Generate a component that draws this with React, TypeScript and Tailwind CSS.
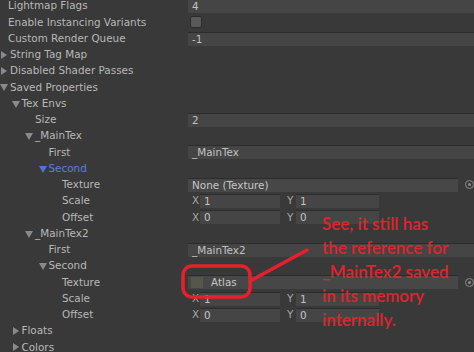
import React from "react";

type Row = {
  label: string;
  indent: number;
  fold?: "open" | "closed";
  selected?: boolean;
  value?: React.ReactNode;
};

const FONT = { fontFamily: '"DejaVu Sans", Verdana, sans-serif' };

function Arrow({ open, blue }: { open: boolean; blue?: boolean }) {
  const fill = blue ? "#4f73d9" : "#8a8a8a";
  return (
    <svg width="8" height="8" viewBox="0 0 8 8" className="shrink-0">
      {open ? <polygon points="0,1 8,1 4,8" fill={fill} /> : <polygon points="1,0 7,4 1,8" fill={fill} />}
    </svg>
  );
}

function Field({ text, className = "" }: { text: string; className?: string }) {
  return (
    <div
      className={`h-[14px] bg-[#454545] border-t border-[#2c2c2c] text-[#c2c2c2] pl-[4px] leading-[13px] truncate ${className}`}
    >
      {text}
    </div>
  );
}

function TextureField({ text, atlas }: { text: string; atlas?: boolean }) {
  return (
    <div className="flex items-center">
      <div className="w-[270px] h-[14px] bg-[#474747] border-t border-[#2c2c2c] text-[#c6c6c6] flex items-center">
        {atlas && <div className="w-[12px] h-[11px] ml-[3px] bg-[#56564a]" />}
        <span className={atlas ? "pl-[8px]" : "pl-[4px]"}>{text}</span>
      </div>
      <div className="ml-[7px] w-[9px] h-[9px] rounded-full border border-[#8a8a8a] flex items-center justify-center">
        <div className="w-[3px] h-[3px] rounded-full bg-[#8a8a8a]" />
      </div>
    </div>
  );
}

function Vec2({ x, y }: { x: string; y: string }) {
  return (
    <div className="flex items-center text-[#a8a8a8]">
      <span className="w-[12px] pl-[4px]">X</span>
      <Field text={x} className="w-[80px]" />
      <span className="w-[16px] pl-[7px]">Y</span>
      <Field text={y} className="w-[83px]" />
    </div>
  );
}

const rows: Row[] = [
  { label: "Lightmap Flags", indent: 0, value: <Field text="4" /> },
  {
    label: "Enable Instancing Variants",
    indent: 0,
    value: <div className="w-[12px] h-[12px] ml-[2px] rounded-[2px] bg-[#595959] border border-[#2c2c2c]" />,
  },
  { label: "Custom Render Queue", indent: 0, value: <Field text="-1" /> },
  { label: "String Tag Map", indent: 0, fold: "closed" },
  { label: "Disabled Shader Passes", indent: 0, fold: "closed" },
  { label: "Saved Properties", indent: 0, fold: "open" },
  { label: "Tex Envs", indent: 1, fold: "open" },
  { label: "Size", indent: 2, value: <Field text="2" /> },
  { label: "_MainTex", indent: 2, fold: "open" },
  { label: "First", indent: 3, value: <Field text="_MainTex" /> },
  { label: "Second", indent: 3, fold: "open", selected: true },
  { label: "Texture", indent: 4, value: <TextureField text="None (Texture)" /> },
  { label: "Scale", indent: 4, value: <Vec2 x="1" y="1" /> },
  { label: "Offset", indent: 4, value: <Vec2 x="0" y="0" /> },
  { label: "_MainTex2", indent: 2, fold: "open" },
  { label: "First", indent: 3, value: <Field text="_MainTex2" /> },
  { label: "Second", indent: 3, fold: "open" },
  { label: "Texture", indent: 4, value: <TextureField text="Atlas" atlas /> },
  { label: "Scale", indent: 4, value: <Vec2 x="1" y="1" /> },
  { label: "Offset", indent: 4, value: <Vec2 x="0" y="0" /> },
  { label: "Floats", indent: 1, fold: "closed" },
  { label: "Colors", indent: 1, fold: "closed" },
];

export default function App() {
  return (
    <div className="relative w-[474px] h-[352px] overflow-hidden bg-[#393939] text-[10.4px]" style={FONT}>
      <div className="mt-[-2px]">
        {rows.map((r, i) => (
          <div key={i} className="flex items-center h-[16.25px]">
            <div
              className="w-[188px] shrink-0 flex items-center"
              style={{ paddingLeft: 8 + r.indent * 13.5 - (r.fold ? 10 : 0) }}
            >
              {r.fold && <Arrow open={r.fold === "open"} blue={r.selected} />}
              <span
                className={`${r.fold ? "ml-[2px]" : ""} whitespace-nowrap ${
                  r.selected ? "text-[#5b7fe0]" : "text-[#b8b8b8]"
                }`}
              >
                {r.label}
              </span>
            </div>
            <div className="flex-1 min-w-0">{r.value}</div>
          </div>
        ))}
      </div>

      <svg className="absolute left-0 top-0" width="474" height="352" viewBox="0 0 474 352">
        <rect x="183" y="266" width="67" height="31" rx="9" fill="none" stroke="#e8202c" strokeWidth="3.5" />
        <line x1="250" y1="281" x2="307" y2="250" stroke="#e8202c" strokeWidth="3.5" strokeLinecap="round" />
      </svg>

      <div
        className="absolute left-[322px] top-[212px] text-[#e0242e] text-[17px] leading-[24px] font-semibold"
        style={{ fontFamily: 'Lato, "Liberation Sans", sans-serif' }}
      >
        <div>See, it still has</div>
        <div>the reference for</div>
        <div>_MainTex2 saved</div>
        <div>in its memory</div>
        <div>internally.</div>
      </div>
    </div>
  );
}
